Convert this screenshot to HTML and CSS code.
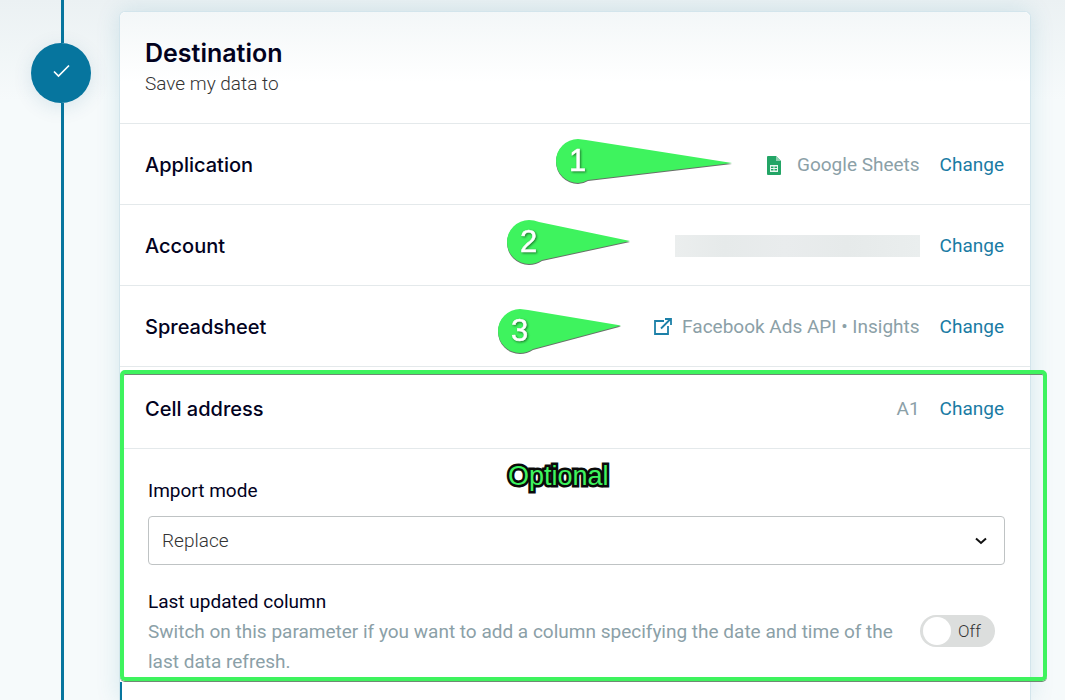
FILE: index.html
```html
<!DOCTYPE html>
<html lang="en">
<head>
  <meta charset="UTF-8">
  <meta name="viewport" content="width=device-width, initial-scale=1">
  <title>Destination</title>
  <link rel="stylesheet" href="styles.css">
</head>
<body>
  <div class="page">
    <div class="rail">
      <div class="rail-line rail-line-top"></div>
      <div class="step-done">
        <svg width="60" height="60" viewBox="0 0 60 60" role="img" aria-label="Done">
          <path d="M23 28.500l4.500 4.500 10.500-10.500" fill="none" stroke="#fff" stroke-width="1.700"/>
        </svg>
      </div>
      <div class="rail-line"></div>
    </div>

    <main class="card">
      <header class="card-header">
        <h1>Destination</h1>
        <p>Save my data to</p>
      </header>

      <div class="row">
        <h2>Application</h2>
        <svg class="marker marker-1" width="178" height="47" viewBox="0 0 178 47">
          <path d="M22 1L30 2 176 25 32 42Q27 45 22 45A22 22 0 0 1 22 1Z"/>
          <text x="13" y="33">1</text>
        </svg>
        <div class="value">
          <svg class="sheets-icon" width="14" height="19" viewBox="0 0 14 19">
            <path d="M1 0h8l5 5v13a1 1 0 0 1-1 1H1a1 1 0 0 1-1-1V1a1 1 0 0 1 1-1z" fill="#23a566"/>
            <path d="M9 0l5 5H9z" fill="#8ed1b1"/>
            <path d="M3 9h8v7H3z" fill="#e9f6ef"/>
            <path d="M4 10.500h2.500v1.500H4zM7.500 10.500H10v1.500H7.500zM4 13h2.500v1.500H4zM7.500 13H10v1.500H7.500z" fill="#23a566"/>
          </svg>
          <span>Google Sheets</span>
        </div>
        <a class="change" href="#">Change</a>
      </div>

      <div class="row">
        <h2>Account</h2>
        <svg class="marker marker-2" width="125" height="47" viewBox="0 0 125 47">
          <path d="M22 1Q27 1 32 3L123 22 35 41Q29 45 22 45A22 22 0 0 1 22 1Z"/>
          <text x="13" y="33">2</text>
        </svg>
        <div class="masked"></div>
        <a class="change" href="#">Change</a>
      </div>

      <div class="row">
        <h2>Spreadsheet</h2>
        <svg class="marker marker-3" width="125" height="47" viewBox="0 0 125 47">
          <path d="M22 1L30 2 123 17.500 35 41Q29 45 22 45A22 22 0 0 1 22 1Z"/>
          <text x="13" y="33">3</text>
        </svg>
        <div class="value">
          <svg width="18" height="18" viewBox="0 0 18 18" fill="none" stroke="#1c80a8" stroke-width="1.800">
            <path d="M10 3H1v13h13V8"/>
            <path d="M7 10.500L16.500 1M11 1h6v6"/>
          </svg>
          <span>Facebook Ads API • Insights</span>
        </div>
        <a class="change" href="#">Change</a>
      </div>

      <section class="optional">
        <div class="row">
          <h2>Cell address</h2>
          <div class="value">A1</div>
          <a class="change" href="#">Change</a>
        </div>

        <div class="settings">
          <label class="field-label" for="importMode">Import mode</label>
          <div class="select-wrap">
            <select id="importMode">
              <option>Replace</option>
              <option>Append</option>
            </select>
            <svg class="chevron" width="12" height="8" viewBox="0 0 12 8">
              <path d="M1 1.500l5 4.500 5-4.500" fill="none" stroke="#111" stroke-width="2"/>
            </svg>
          </div>

          <div class="switch-row">
            <div class="switch-text">
              <label class="field-label" for="lastUpdated">Last updated column</label>
              <p>Switch on this parameter if you want to add a column specifying the date and time of the last data refresh.</p>
            </div>
            <label class="toggle">
              <input type="checkbox" id="lastUpdated">
              <span>Off</span>
            </label>
          </div>
        </div>

        <div class="highlight"></div>
        <div class="optional-tag">Optional</div>
      </section>

      <div class="next-section"></div>
    </main>
  </div>
</body>
</html>
```

FILE: styles.css
```css
* {
  box-sizing: border-box;
}
body {
  margin: 0;
  font-family: Roboto, sans-serif;
  font-size: 19px;
  font-weight: 300;
  line-height: 30px;
  color: #333;
  background: #f6fafb linear-gradient(#ebf1f3, #f6fafb 100px) no-repeat;
}
h1, h2, p {
  margin: 0;
}

.page {
  display: flex;
  min-height: 100vh;
  padding-right: 34px;
}

/* timeline */
.rail {
  display: flex;
  flex-direction: column;
  flex: none;
  width: 119px;
  padding-left: 31px;
}
.rail-line {
  flex: 1;
  width: 3px;
  margin-left: 30px;
  background: #06759e;
}
.rail-line-top {
  flex: none;
  height: 43px;
}
.step-done {
  width: 60px;
  height: 60px;
  border-radius: 50%;
  background: #06759e;
  box-shadow: 0 4px 20px rgba(6, 80, 120, 0.12);
}
.step-done svg {
  display: block;
}

/* card */
.card {
  display: flex;
  flex-direction: column;
  flex: 1;
  min-width: 0;
  margin-top: 11px;
  border: 1px solid #d3e5ec;
  border-bottom: 0;
  border-radius: 6px 6px 0 0;
  background: #fff;
  box-shadow: 0 0 24px rgba(6, 117, 158, 0.14);
}
.card-header {
  padding: 25px 25px 24px;
  border-bottom: 1px solid #e4e9eb;
  border-radius: 6px 6px 0 0;
  background: linear-gradient(#f3f7f8, #fff 70px);
}
h1 {
  font-family: Inter, sans-serif;
  font-size: 25px;
  font-weight: 600;
  line-height: 32px;
  color: #02021e;
}
.row {
  position: relative;
  display: flex;
  align-items: center;
  height: 81px;
  padding: 2px 26px 0 25px;
  border-bottom: 1px solid #e4e9eb;
}
h2 {
  flex: 1;
  font-family: Inter, sans-serif;
  font-size: 20px;
  font-weight: 500;
  color: #02021e;
}
.value {
  display: flex;
  align-items: center;
  gap: 10px;
  font-weight: 400;
  color: #8ba0a7;
}
.sheets-icon {
  margin-right: 6px;
}
.masked {
  width: 245px;
  height: 22px;
  background: linear-gradient(90deg, #ebeeee, #e6eaea 20%, #e9eced 45%, #e6eaea 70%, #eaeeee);
}
.change {
  margin-left: 20px;
  font-weight: 400;
  color: #1a7ba4;
  text-decoration: none;
}
.change:hover {
  text-decoration: underline;
}

/* numbered pointers */
.marker {
  position: absolute;
  fill: #3ef35e;
  filter: drop-shadow(0 1px 0 rgba(40, 50, 40, 0.7));
}
.marker text {
  font-family: "Liberation Sans", sans-serif;
  font-size: 31px;
  font-weight: 400;
  fill: #fff;
  stroke: #fff;
  stroke-width: 0.5px;
  filter: drop-shadow(1px 1px 1px rgba(0, 0, 0, 0.5));
}
.marker-1 {
  top: 14px;
  right: 296px;
}
.marker-2 {
  top: 14px;
  right: 398px;
}
.marker-3 {
  top: 22px;
  right: 407px;
}

/* import settings */
.optional {
  position: relative;
}
.optional .row {
  height: 82px;
}
.settings {
  padding: 27px 25px 5px 28px;
}
.field-label {
  display: block;
  font-weight: 400;
  color: #02021e;
}
.select-wrap {
  position: relative;
  margin: 10px 0 22px;
}
.select-wrap select {
  display: block;
  width: 100%;
  height: 49px;
  padding: 0 40px 0 13px;
  border: 1px solid #bfc3c4;
  border-radius: 4px;
  background: #fff;
  color: #333;
  font: inherit;
  appearance: none;
}
.chevron {
  position: absolute;
  top: 21px;
  right: 18px;
  pointer-events: none;
}
.switch-row {
  display: flex;
  align-items: flex-start;
  gap: 12px;
  padding-right: 10px;
}
.switch-text {
  flex: 1;
}
.switch-text p {
  font-weight: 400;
  color: #8ba0a7;
}
.toggle {
  display: flex;
  align-items: center;
  gap: 7px;
  width: 75px;
  height: 32px;
  margin-top: 28px;
  padding-left: 3px;
  border-radius: 16px;
  background: #dcdedd;
  font-size: 17px;
  cursor: pointer;
}
.toggle input {
  width: 28px;
  height: 28px;
  margin: 0;
  border-radius: 50%;
  background: #fff;
  appearance: none;
}
.highlight {
  position: absolute;
  top: 3px;
  right: -17px;
  bottom: 1px;
  left: 0;
  border: 4px solid #3ef35e;
  border-radius: 5px;
  box-shadow: 0 1px 0 #6f8a74, inset 0 1px 0 #6f8a74;
  pointer-events: none;
}
.optional-tag {
  position: absolute;
  top: 94px;
  left: 388px;
  font-family: "Liberation Sans", sans-serif;
  font-size: 27px;
  font-weight: 400;
  color: #3ef35e;
  -webkit-text-stroke: 5px #0a0a0a;
  paint-order: stroke fill;
}
.next-section {
  flex: 1;
  border-left: 2px solid #06759e;
}
```
